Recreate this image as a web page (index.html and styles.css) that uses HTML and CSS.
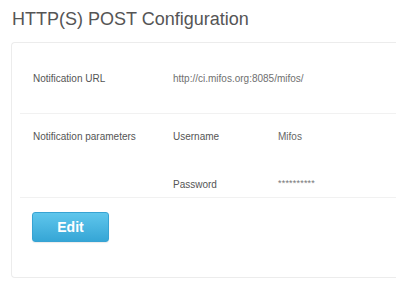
FILE: index.html
```html
<!DOCTYPE html>
<html>
<head>
<meta charset="utf-8">
<link rel="stylesheet" href="styles.css">
</head>
<body>
<div class="page">
  <h1 class="title">HTTP(S) POST Configuration</h1>
  <div class="card">
    <div class="row row-url">
      <div class="cell label">Notification URL</div>
      <div class="cell value url">http://ci.mifos.org:8085/mifos/</div>
    </div>
    <div class="row row-params">
      <div class="cell label">Notification parameters</div>
      <div class="params">
        <div class="param">
          <div class="cell key">Username</div>
          <div class="cell value">Mifos</div>
        </div>
        <div class="param param-last">
          <div class="cell key">Password</div>
          <div class="cell value stars">**********</div>
        </div>
      </div>
    </div>
    <div class="actions">
      <button class="btn-edit" type="button">Edit</button>
    </div>
  </div>
</div>
</body>
</html>
```
FILE: styles.css
```css
html, body {
  margin: 0;
  padding: 0;
  background: #ffffff;
  overflow: hidden;
}
body {
  font-family: "Liberation Sans", Arial, sans-serif;
  width: 396px;
  height: 290px;
}
.page {
  padding: 0 0 0 11px;
}
.title {
  margin: 0;
  padding: 8px 0 0 1px;
  font-size: 18px;
  line-height: 22px;
  font-weight: normal;
  color: #555555;
  height: 34px;
}
.card {
  height: 234px;
  border: 1px solid #ececec;
  border-right: none;
  border-radius: 4px 0 0 4px;
  padding: 0 0 0 8px;
}
.row {
  display: grid;
  grid-template-columns: 140px 1fr;
  border-bottom: 1px solid #f1f1f1;
  font-size: 10px;
  line-height: 12px;
}
.row-url {
  padding: 30px 0 28px;
}
.row-params {
  padding: 17px 0 6px;
}
.cell {
  padding-left: 13px;
  white-space: nowrap;
}
.label {
  color: #555555;
}
.value {
  color: #666666;
}
.url {
  color: #707070;
}
.params {
  display: flex;
  flex-direction: column;
  gap: 36px;
}
.param {
  display: grid;
  grid-template-columns: 105px 1fr;
}
.key {
  color: #555555;
}
.stars {
  font-size: 9px;
  letter-spacing: 0.2px;
  color: #777777;
  position: relative;
  top: -2px;
}
.actions {
  padding: 14px 0 0 12px;
}
.btn-edit {
  width: 77px;
  height: 30px;
  border: 1px solid #37a3d3;
  border-radius: 3px;
  background: linear-gradient(#5fc6ec, #36a6d6);
  color: #ffffff;
  font-family: "Liberation Sans", Arial, sans-serif;
  font-size: 14px;
  font-weight: bold;
  padding: 0;
  box-shadow: 0 1px 1px rgba(0,0,0,0.08);
}
```
